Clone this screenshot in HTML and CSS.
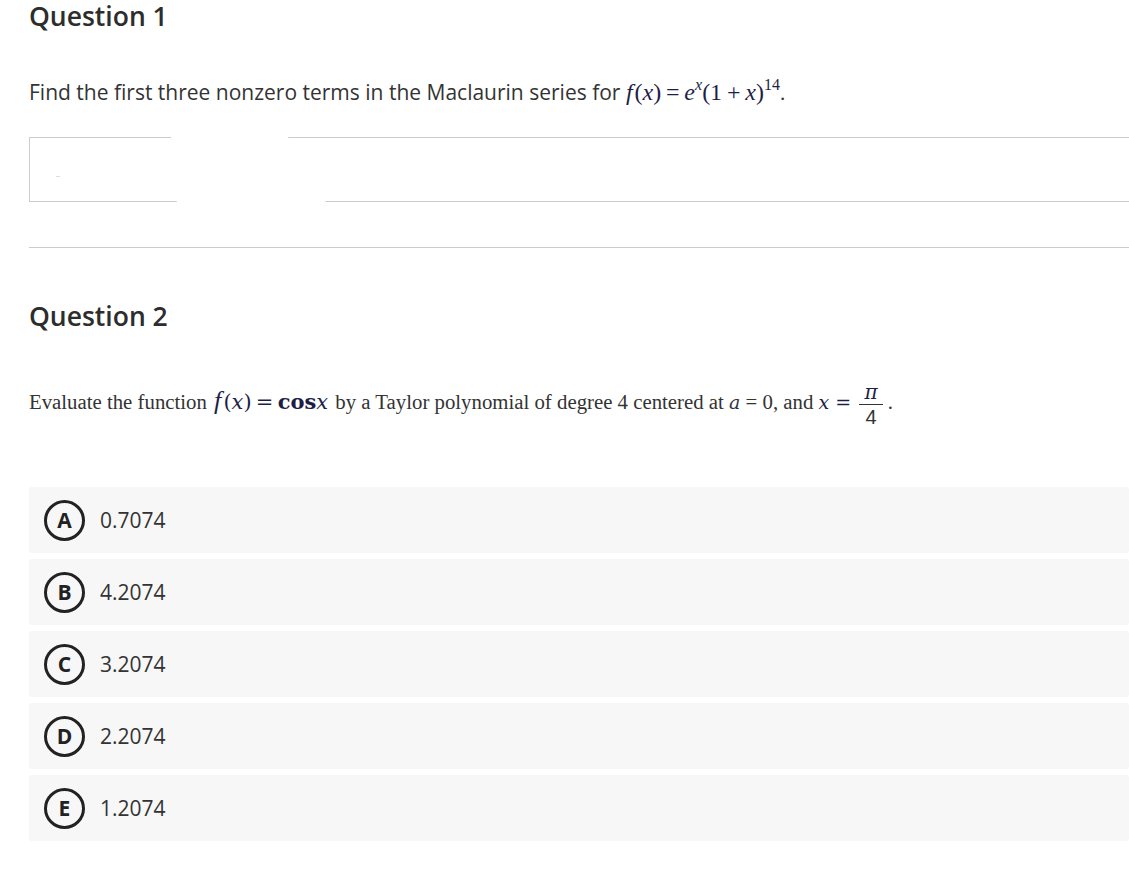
FILE: index.html
```html
<!DOCTYPE html>
<html>
<head>
<meta charset="utf-8">
<link rel="stylesheet" href="styles.css">
</head>
<body>
<main class="page">
  <section class="question q1">
    <h2 class="q-title">Question 1</h2>
    <p class="q-text">Find the first three nonzero terms in the Maclaurin series for <span class="math m1"><i>f</i>&hairsp;(<i>x</i>)&thinsp;=&thinsp;<i>e</i><sup><i>x</i></sup>(1&thinsp;+&thinsp;<i>x</i>)<sup>14</sup></span><span class="dot">.</span></p>
    <div class="answer-box">
      <span class="mark"></span>
      <span class="smudge"></span>
    </div>
  </section>
  <hr class="sep">
  <section class="question q2">
    <h2 class="q-title">Question 2</h2>
    <p class="q-text serif">Evaluate the function <span class="math m2"><i class="fi">f</i>&hairsp;(<i>x</i>)&thinsp;<span class="eq">=</span>&thinsp;<b>cos</b><i>x</i></span> by a Taylor polynomial of degree 4 centered at <i class="av">a</i> = 0, and <span class="m2x"><i>x</i> =</span> <span class="frac"><span class="num"><i>π</i></span><span class="den">4</span></span> .</p>
    <ul class="options">
      <li class="opt"><span class="badge">A</span><span class="val">0.7074</span></li>
      <li class="opt"><span class="badge">B</span><span class="val">4.2074</span></li>
      <li class="opt"><span class="badge">C</span><span class="val">3.2074</span></li>
      <li class="opt"><span class="badge">D</span><span class="val">2.2074</span></li>
      <li class="opt"><span class="badge">E</span><span class="val">1.2074</span></li>
    </ul>
  </section>
</main>
</body>
</html>
```

FILE: styles.css
```css
html, body {
  margin: 0;
  padding: 0;
  background: #fff;
}
body {
  font-family: "Open Sans", "Liberation Sans", sans-serif;
  color: #333;
}
.page {
  padding-left: 29px;
  width: 1100px;
}
.q-title {
  margin: 0;
  font-size: 26.5px;
  font-weight: 600;
  color: #2d2d2d;
  line-height: 32px;
}
.q-text {
  margin: 0;
  font-size: 21px;
  color: #333;
}
.q1 .q-text {
  margin-top: 44px;
  line-height: 32px;
}
.math {
  font-family: "Liberation Serif", "DejaVu Serif", serif;
  color: #1e1e45;
  line-height: 1;
}
.m1 {
  font-size: 24px;
}
.m1 sup {
  font-size: 16px;
  vertical-align: 10px;
  line-height: 0;
}
.dot {
  font-family: "Liberation Serif", serif;
}
.answer-box {
  position: relative;
  margin-top: 28px;
  height: 63px;
  border: 1px solid #ccc;
  border-right: none;
}
.smudge {
  position: absolute;
  top: -2px;
  left: 141px;
  width: 160px;
  height: 68px;
  background: #fff;
  clip-path: polygon(0 0, 116px 0, 156px 100%, 6px 100%);
}
.mark {
  position: absolute;
  left: 26px;
  top: 38px;
  width: 4px;
  height: 1px;
  background: #ddd;
}
.sep {
  margin: 45px 0 0;
  border: none;
  border-top: 1px solid #ccc;
  height: 0;
}
.q2 .q-title {
  margin-top: 52px;
}
.q2 .q-text.serif {
  margin-top: 44px;
  font-family: "Liberation Serif", "Times New Roman", serif;
  font-size: 20.8px;
  color: #333;
  line-height: 52px;
}
.m2 {
  font-family: "DejaVu Serif", "Liberation Serif", serif;
  font-size: 21px;
  color: #1e1e45;
  margin: 0 2px;
}
.m2 b {
  font-weight: 600;
}
.m2 .fi {
  font-family: "Liberation Serif", serif;
  font-size: 26px;
}
.av {
  font-family: "DejaVu Serif", serif;
  color: #334;
  font-size: 19px;
}
.m2x {
  color: #1e1e45;
  font-family: "DejaVu Serif", serif;
  font-size: 19px;
}
.frac {
  display: inline-flex;
  flex-direction: column;
  align-items: center;
  vertical-align: middle;
  font-family: "DejaVu Serif", serif;
  font-size: 20px;
  line-height: 22px;
  color: #1e1e45;
  margin: 0 0 0 3px;
}
.frac .num {
  border-bottom: 1px solid #333;
  padding: 0 5px 1px;
}
.frac .den {
  padding-top: 1px;
  font-family: "Liberation Sans", sans-serif;
  color: #333;
}
.options {
  list-style: none;
  margin: 59px 0 0;
  padding: 0;
  display: flex;
  flex-direction: column;
  gap: 6px;
}
.opt {
  display: flex;
  align-items: center;
  height: 66px;
  background: #f7f7f7;
  border-radius: 3px;
  padding-left: 15px;
}
.badge {
  box-sizing: border-box;
  width: 41px;
  height: 41px;
  border: 3px solid #222;
  border-radius: 50%;
  display: flex;
  align-items: center;
  justify-content: center;
  font-weight: 700;
  font-size: 21px;
  color: #222;
  margin-right: 15px;
}
.val {
  font-size: 21px;
  color: #333;
}
```
